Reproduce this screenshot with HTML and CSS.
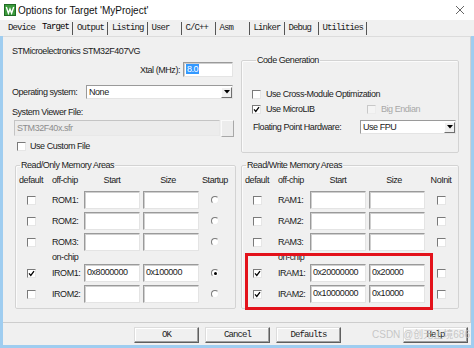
FILE: index.html
```html
<!DOCTYPE html>
<html lang="en">
<head>
  <meta charset="UTF-8" />
  <title>Options for Target 'MyProject'</title>
  <link rel="stylesheet" href="styles.css">
</head>
<body>
  <div class="win">
    <div class="titlebar">
      <svg class="appicon" width="12" height="12" viewBox="0 0 12 12">
        <rect x="0.5" y="0.5" width="11" height="11" fill="#3c9a3c" stroke="#1f6b24" />
        <path d="M2.3 3 L4.4 9.2 L6 5 L7.6 9.2 L9.7 3" fill="none" stroke="#fff" stroke-width="1.4" />
      </svg>
      <span class="title">Options for Target 'MyProject'</span>
      <svg class="close" width="10" height="10" viewBox="0 0 10 10">
        <path d="M1 1 L9 9 M9 1 L1 9" stroke="#666" stroke-width="1" />
      </svg>
    </div>

    <div class="tabs">
      <span class="tab">Device</span>
      <span class="tab active">Target</span>
      <span class="tab sep">Output</span>
      <span class="tab sep">Listing</span>
      <span class="tab sep">User</span>
      <span class="tab sep">C/C++</span>
      <span class="tab sep">Asm</span>
      <span class="tab sep">Linker</span>
      <span class="tab sep">Debug</span>
      <span class="tab sep last">Utilities</span>
    </div>

    <div class="frame">
      <div class="page">
        <div class="top">
          <div class="left">
            <div class="device">STMicroelectronics STM32F407VG</div>
            <div class="row xtal">
              <span>Xtal (MHz):</span>
              <span class="field xtal-field"><span class="selected">8.0</span></span>
            </div>
            <div class="row os-row">
              <span>Operating system:</span>
              <span class="combo os">None<span class="drop"><svg width="6" height="4" viewBox="0 0 6 4"><path d="M0 0 H6 L3 3.5 Z" fill="#000" /></svg></span></span>
            </div>
            <div class="caption">System Viewer File:</div>
            <div class="row svf-row">
              <span class="field disabled svf">STM32F40x.sfr</span>
              <span class="browse"></span>
            </div>
            <div class="check-row custom"><span class="cb"></span>Use Custom File</div>
          </div>

          <fieldset class="group code">
            <legend>Code Generation</legend>
            <div class="check-row"><span class="cb"></span>Use Cross-Module Optimization</div>
            <div class="check-row pair">
              <span class="check-row first"><span class="cb"><svg width="7" height="7" viewBox="0 0 7 7"><path d="M1 3.4 L2.8 5.4 L6 1.2" fill="none" stroke="#000" stroke-width="1.3" /></svg></span>Use MicroLIB</span>
              <span class="check-row off"><span class="cb off"></span>Big Endian</span>
            </div>
            <div class="row fpu">
              <span>Floating Point Hardware:</span>
              <span class="combo fpu-combo">Use FPU<span class="drop"><svg width="6" height="4" viewBox="0 0 6 4"><path d="M0 0 H6 L3 3.5 Z" fill="#000" /></svg></span></span>
            </div>
          </fieldset>
        </div>

        <div class="mem">
          <fieldset class="group ro">
            <legend>Read/Only Memory Areas</legend>
            <div class="memgrid">
              <span class="hd center">default</span><span class="hd name">off-chip</span><span class="hd center">Start</span><span class="hd center size-hd">Size</span><span class="hd center">Startup</span>

              <span class="cb"></span><span class="name">ROM1:</span><span class="field cell"></span><span class="field cell"></span><span class="radio"></span>
              <span class="cb"></span><span class="name">ROM2:</span><span class="field cell"></span><span class="field cell"></span><span class="radio"></span>
              <span class="cb"></span><span class="name">ROM3:</span><span class="field cell"></span><span class="field cell"></span><span class="radio"></span>

              <span class="onchip">on-chip</span>

              <span class="cb"><svg width="7" height="7" viewBox="0 0 7 7"><path d="M1 3.4 L2.8 5.4 L6 1.2" fill="none" stroke="#000" stroke-width="1.3" /></svg></span><span class="name">IROM1:</span><span class="field cell">0x8000000</span><span class="field cell">0x100000</span><span class="radio on"></span>
              <span class="cb"></span><span class="name">IROM2:</span><span class="field cell"></span><span class="field cell"></span><span class="radio"></span>
            </div>
          </fieldset>

          <fieldset class="group rw">
            <legend>Read/Write Memory Areas</legend>
            <div class="memgrid">
              <span class="hd center">default</span><span class="hd name">off-chip</span><span class="hd center">Start</span><span class="hd center size-hd">Size</span><span class="hd center">NoInit</span>

              <span class="cb"></span><span class="name">RAM1:</span><span class="field cell"></span><span class="field cell"></span><span class="cb"></span>
              <span class="cb"></span><span class="name">RAM2:</span><span class="field cell"></span><span class="field cell"></span><span class="cb"></span>
              <span class="cb"></span><span class="name">RAM3:</span><span class="field cell"></span><span class="field cell"></span><span class="cb"></span>

              <span class="onchip">on-chip</span>

              <span class="cb"><svg width="7" height="7" viewBox="0 0 7 7"><path d="M1 3.4 L2.8 5.4 L6 1.2" fill="none" stroke="#000" stroke-width="1.3" /></svg></span><span class="name">IRAM1:</span><span class="field cell">0x20000000</span><span class="field cell">0x20000</span><span class="cb"></span>
              <span class="cb"><svg width="7" height="7" viewBox="0 0 7 7"><path d="M1 3.4 L2.8 5.4 L6 1.2" fill="none" stroke="#000" stroke-width="1.3" /></svg></span><span class="name">IRAM2:</span><span class="field cell">0x10000000</span><span class="field cell">0x10000</span><span class="cb"></span>
            </div>
          </fieldset>
        </div>

        <div class="highlight"></div>
      </div>

      <div class="buttons">
        <span class="btn">OK</span>
        <span class="btn">Cancel</span>
        <span class="btn">Defaults</span>
        <span class="btn help">Help</span>
      </div>
    </div>

    <div class="watermark">CSDN @创无止境686</div>
  </div>
</body>
</html>
```

FILE: styles.css
```css
body {
  margin: 0;
  background: #f0f0f0;
  font-family: "Liberation Sans", Arial, sans-serif;
  font-size: 9px;
  letter-spacing: -0.45px;
  color: #1b1b1b;
}
.win {
  width: 474px;
  height: 348px;
  position: relative;
  overflow: hidden;
  display: flex;
  flex-direction: column;
}
.titlebar {
  height: 20px;
  flex: none;
  background: #fff;
  display: flex;
  align-items: center;
  padding-left: 4px;
}
.title {
  font-size: 10px;
  letter-spacing: 0;
  margin-left: 2px;
  color: #111;
}
.close {
  margin-left: auto;
  margin-right: 9px;
}
.tabs {
  height: 16px;
  flex: none;
  display: flex;
  align-items: center;
  padding-left: 4px;
  font-family: "Liberation Mono", monospace;
  font-size: 9px;
  letter-spacing: -0.9px;
}
.tab {
  min-width: 34px;
  box-sizing: border-box;
  padding: 0 3px 0 4px;
  height: 13px;
  line-height: 13px;
  color: #222;
}
.tab.sep {
  border-left: 1px solid #555;
}
.tab.last {
  border-right: 1px solid #555;
}
.tab.active {
  position: relative;
  top: -1px;
  color: #000;
}

.frame {
  flex: 1;
  display: flex;
  flex-direction: column;
  border: 3px solid #9fcdf0;
  border-top: 0;
}
.page {
  position: relative;
  border-top: 1px solid #dcdcdc;
  border-right: 1px solid #d2d2d2;
  border-bottom: 1px solid #cdcdcd;
  padding: 8px 11px 13px 9px;
}
.top {
  display: grid;
  grid-template-columns: 222px 218px;
  column-gap: 7px;
  align-items: start;
}
.device {
  line-height: 12px;
}
.row {
  display: flex;
  align-items: center;
  white-space: nowrap;
}
.xtal {
  justify-content: flex-end;
  gap: 3px;
  margin: 5px 1px 0 0;
  height: 15px;
}
.os-row {
  margin: 8px 1px 0 0;
  height: 14px;
}
.caption {
  margin-top: 7px;
  line-height: 12px;
}
.svf-row {
  margin-top: 2px;
  height: 16px;
}
.custom {
  margin-top: 4px;
  padding-left: 5px;
}

.field {
  box-sizing: border-box;
  background: #fff;
  border: 1px solid;
  border-color: #9a9a9a #e4e4e4 #e4e4e4 #9a9a9a;
  box-shadow: inset 1px 1px #cfcfcf;
  padding: 1px 0 0 2px;
  line-height: 11px;
  white-space: nowrap;
  overflow: hidden;
}
.xtal-field {
  width: 50px;
  height: 15px;
}
.selected {
  background: #3399ff;
  color: #fff;
  padding: 0 1px;
}
.svf {
  margin-left: 2px;
  width: 206px;
  height: 16px;
  padding-top: 2px;
}
.field.disabled {
  background: #ececec;
  color: #8c8c8c;
  border-color: #c4c4c4 #e8e8e8 #e8e8e8 #c4c4c4;
  box-shadow: none;
}
.browse {
  width: 13px;
  height: 17px;
  margin-left: 1px;
  box-sizing: border-box;
  background: #ececec;
  border: 1px solid;
  border-color: #fafafa #a8a8a8 #a8a8a8 #fafafa;
}
.combo {
  box-sizing: border-box;
  height: 14px;
  background: #fff;
  border: 1px solid;
  border-color: #9a9a9a #e4e4e4 #e4e4e4 #9a9a9a;
  display: flex;
  align-items: center;
  padding-left: 2px;
}
.os {
  width: 147px;
  margin-left: auto;
}
.drop {
  margin-left: auto;
  width: 11px;
  height: 11px;
  box-sizing: border-box;
  background: #f0f0f0;
  border: 1px solid;
  border-color: #fff #707070 #707070 #fff;
  display: flex;
  align-items: center;
  justify-content: center;
}

.check-row {
  display: flex;
  align-items: center;
  gap: 4px;
  line-height: 12px;
  white-space: nowrap;
}
.cb {
  width: 9px;
  height: 9px;
  box-sizing: border-box;
  background: #fff;
  border: 1px solid;
  border-color: #7a7a7a #e6e6e6 #e6e6e6 #7a7a7a;
  display: flex;
  align-items: center;
  justify-content: center;
}
.cb.off {
  background: #f4f4f4;
  border-color: #c8c8c8 #ececec #ececec #c8c8c8;
}
.off {
  color: #a8a8a8;
}
.radio {
  width: 8px;
  height: 8px;
  box-sizing: border-box;
  border-radius: 50%;
  background: #fff;
  border: 1px solid;
  border-color: #7a7a7a #eeeeee #eeeeee #7a7a7a;
  justify-self: center;
  display: flex;
  align-items: center;
  justify-content: center;
}
.radio.on::after {
  content: "";
  width: 3px;
  height: 3px;
  border-radius: 50%;
  background: #000;
}

.group {
  margin: 0;
  padding: 0;
  min-width: 0;
  border: 1px solid #d3d3d3;
  border-radius: 2px;
  box-shadow: inset 1px 1px #fbfbfb;
}
.group legend {
  margin-left: 4px;
  padding: 0 1px;
  line-height: 12px;
}
.code {
  margin-top: 9px;
  padding: 22px 0 18px 10px;
}
.code .check-row {
  gap: 5px;
}
.pair {
  margin-top: 3px;
}
.pair .first {
  width: 110px;
}
.fpu {
  margin-top: 5px;
  height: 14px;
  padding-left: 1px;
}
.fpu-combo {
  margin-left: auto;
  margin-right: 2px;
  width: 96px;
}

.mem {
  display: grid;
  grid-template-columns: 221px 218px;
  column-gap: 5px;
  margin: 6px 0 0 3px;
}
.memgrid {
  display: grid;
  grid-template-columns: 30px 38px 59px 56px 32px;
  row-gap: 3px;
  align-items: center;
  padding: 3px 0 5px 0;
}
.hd {
  line-height: 12px;
  margin-bottom: 2px;
}
.center {
  text-align: center;
}
.memgrid .hd:nth-child(3) {
  width: 56px;
}
.size-hd {
  padding-right: 6px;
}
.name {
  padding-left: 6px;
  white-space: nowrap;
}
.memgrid .cb {
  justify-self: center;
}
.memgrid .cell {
  width: 56px;
  height: 18px;
  padding-top: 2px;
}
.onchip {
  grid-column: 1 / -1;
  padding-left: 36px;
  line-height: 12px;
  margin: -3px 0 -2px;
}

.highlight {
  position: absolute;
  left: 242px;
  top: 216px;
  width: 188px;
  height: 57px;
  box-sizing: border-box;
  border: 3px solid #e3121b;
}

.buttons {
  display: flex;
  gap: 6px;
  padding: 4px 3px 2px 131px;
}
.btn {
  width: 65px;
  height: 16px;
  box-sizing: border-box;
  background: #f0f0f0;
  border: 1px solid;
  border-color: #dcdcdc #5f5f5f #5f5f5f #dcdcdc;
  box-shadow: inset -1px -1px #a0a0a0, inset 1px 1px #fff;
  font-family: "Liberation Mono", monospace;
  font-size: 9px;
  letter-spacing: -0.9px;
  line-height: 14px;
  text-align: center;
}
.help {
  margin-left: auto;
}
.watermark {
  position: absolute;
  left: 372px;
  top: 329px;
  font-family: "Liberation Sans", "Noto Sans CJK SC", sans-serif;
  font-size: 10px;
  letter-spacing: 0;
  line-height: 12px;
  color: rgba(190, 190, 190, 0.85);
  white-space: nowrap;
}
```
